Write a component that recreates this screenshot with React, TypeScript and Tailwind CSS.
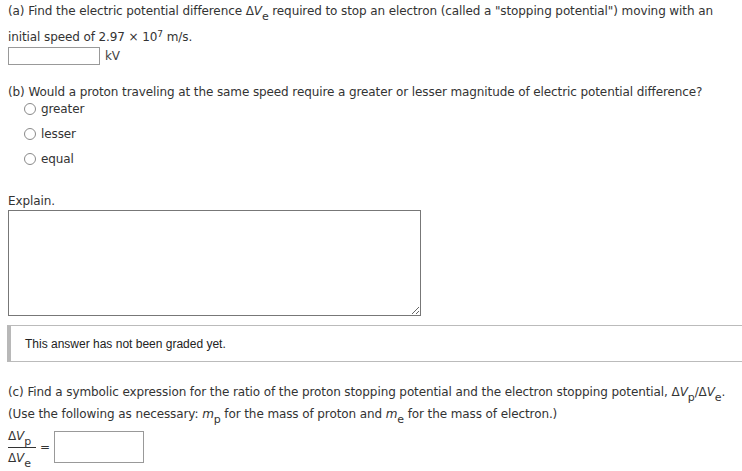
import React from 'react';

const font = { fontFamily: '"DejaVu Sans", Verdana, sans-serif' };

const Sub = ({ children }: { children: React.ReactNode }) => (
  <span className="text-[11px] leading-none relative top-[5px]">{children}</span>
);

const Radio = ({ label }: { label: string }) => (
  <label className="flex items-center gap-[5px] h-[25px]">
    <span className="w-[12px] h-[12px] rounded-full border border-[#8a8a8a] bg-white" />
    <span>{label}</span>
  </label>
);

export default function App() {
  return (
    <div className="bg-white text-[#333] text-[12px] tracking-[-0.1px] w-[742px] h-[471px] overflow-hidden" style={font}>
      {/* part a */}
      <div className="pl-[8px] pt-[2px]">
        <p className="leading-[18px] whitespace-nowrap">
          (a) Find the electric potential difference Δ<i>V</i>
          <Sub>e</Sub> required to stop an electron (called a "stopping potential") moving with an
        </p>
        <p className="leading-[18px] mt-[8px]">
          initial speed of 2.97 × 10<sup className="text-[9px] leading-none">7</sup> m/s.
        </p>
        <div className="flex items-center gap-[5px] mt-[1px]">
          <div className="w-[92px] h-[18px] border border-[#999] bg-white" />
          <span className="text-[12px] text-[#444]">kV</span>
        </div>
      </div>

      {/* part b */}
      <div className="pl-[8px] mt-[18px]">
        <p className="leading-[18px] whitespace-nowrap">
          (b) Would a proton traveling at the same speed require a greater or lesser magnitude of electric potential difference?
        </p>
        <div className="pl-[16px] -mt-[5px]">
          <Radio label="greater" />
          <Radio label="lesser" />
          <Radio label="equal" />
        </div>
        <p className="mt-[21px] leading-[18px]">Explain.</p>
        <textarea className="block w-[413px] h-[106px] border border-[#777] resize-y" />
      </div>

      {/* graded box */}
      <div className="ml-[7px] mt-[9px] border-l-[4px] border-l-[#b8b8b8] border-y border-y-[#bbb] h-[37px] flex items-center pl-[14px]">
        <span className="text-[12px] text-[#222] tracking-normal" style={{ fontFamily: '"Liberation Sans", Arial, sans-serif' }}>
          This answer has not been graded yet.
        </span>
      </div>

      {/* part c */}
      <div className="pl-[8px] mt-[21px]">
        <p className="leading-[18px] whitespace-nowrap">
          (c) Find a symbolic expression for the ratio of the proton stopping potential and the electron stopping potential, Δ<i>V</i>
          <Sub>p</Sub>/Δ<i>V</i>
          <Sub>e</Sub>.
        </p>
        <p className="leading-[18px] mt-[4px] whitespace-nowrap">
          (Use the following as necessary: <i>m</i>
          <Sub>p</Sub> for the mass of proton and <i>m</i>
          <Sub>e</Sub> for the mass of electron.)
        </p>
        <div className="flex items-center mt-[6px]">
          <div className="flex flex-col items-start text-[12px]">
            <span className="leading-[14px] pb-[4px]">
              Δ<i>V</i><Sub>p</Sub>
            </span>
            <span className="w-[28px] border-t border-[#333]" />
            <span className="leading-[14px] pt-[3px]">
              Δ<i>V</i><Sub>e</Sub>
            </span>
          </div>
          <span className="ml-[4px] text-[12px]">=</span>
          <div className="ml-[4px] w-[90px] h-[32px] border border-[#999] bg-white" />
        </div>
      </div>
    </div>
  );
}
